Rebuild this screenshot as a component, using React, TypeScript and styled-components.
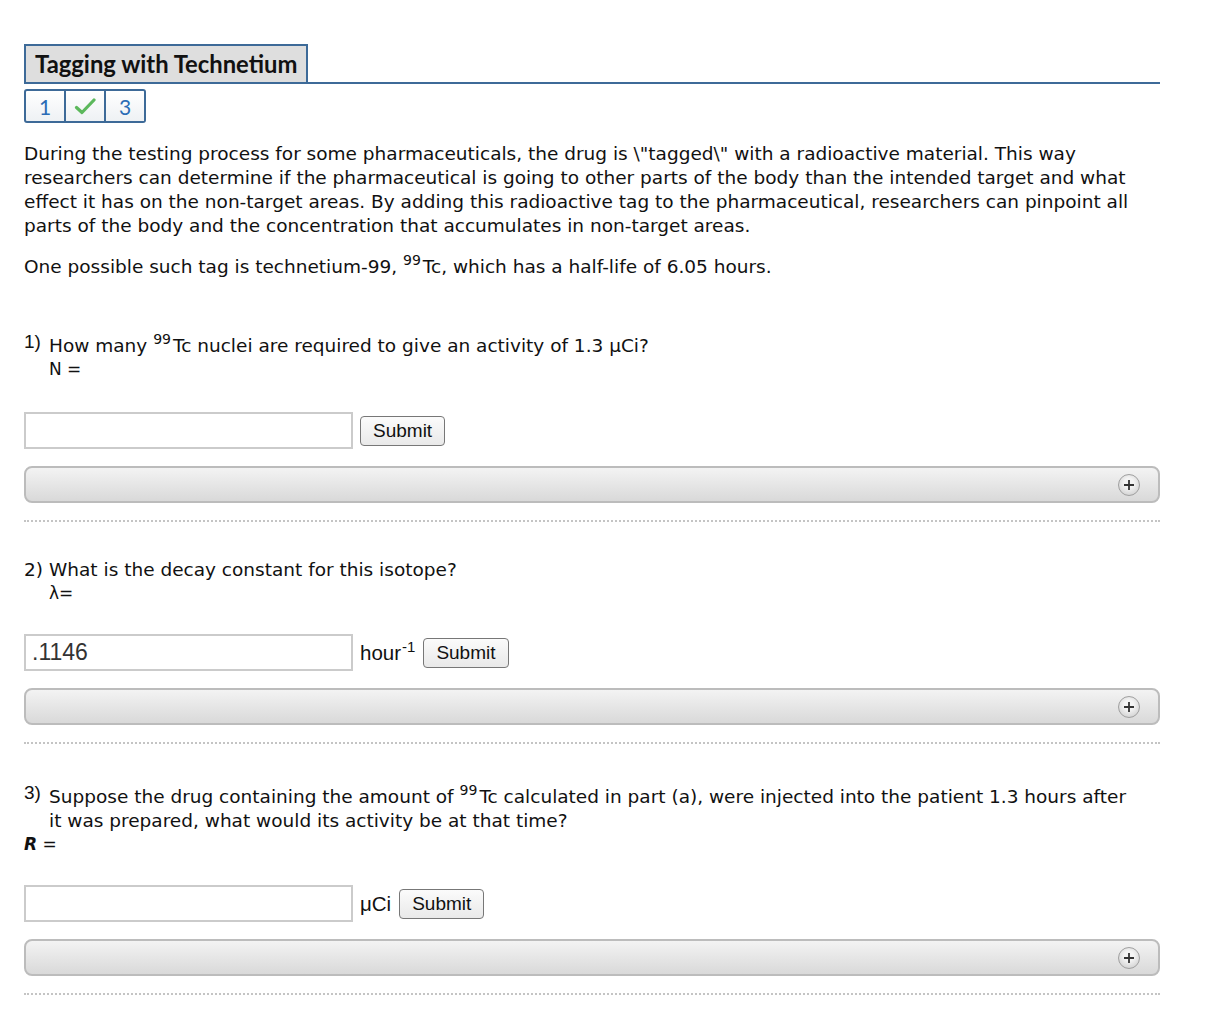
import React from "react"
import styled, { createGlobalStyle } from "styled-components"

const GlobalStyle = createGlobalStyle`
  body {
    margin: 0;
    background: #fff;
    color: #111;
    font-family: "DejaVu Sans", Verdana, sans-serif;
  }
`

const Page = styled.div`
  padding: 44px 58px 20px 24px;
`

const Header = styled.div`
  display: flex;
  border-bottom: 2px solid #3d6a98;
`

const Tab = styled.div`
  background: #dedede;
  border: 2px solid #3d6a98;
  border-bottom: none;
  padding: 0 9px 0 9px;
  height: 36px;
  display: flex;
  align-items: center;
  font-family: Lato, "Open Sans", sans-serif;
  font-weight: 700;
  font-size: 23.8px;
  color: #111;
`

const Pager = styled.div`
  display: flex;
  margin-top: 5px;
`

const PageBox = styled.div<{ $first?: boolean; $last?: boolean }>`
  width: 38px;
  height: 30px;
  border: 2px solid #3d6a98;
  border-left-width: ${(p) => (p.$first ? "2px" : "0")};
  border-radius: ${(p) => (p.$first ? "3px 0 0 3px" : p.$last ? "0 3px 3px 0" : "0")};
  background: linear-gradient(#ffffff, #eef1f4);
  display: flex;
  align-items: center;
  justify-content: center;
  font-family: Lato, "Open Sans", sans-serif;
  font-size: 21px;
  color: #2b6cb5;
`

const Para = styled.p<{ $gap?: number }>`
  margin: ${(p) => p.$gap ?? 0}px 0 0;
  font-size: 18.5px;
  line-height: 24px;
`

const Sup = styled.sup`
  font-size: 0.76em;
  line-height: 0;
  position: relative;
  top: -0.08em;
  margin-right: 2px;
`

const Question = styled.div<{ $gap: number }>`
  margin-top: ${(p) => p.$gap}px;
  display: flex;
  align-items: flex-start;
`

const Num = styled.span<{ $plain?: boolean }>`
  width: 25px;
  flex: none;
  font-family: ${(p) => (p.$plain ? `"DejaVu Sans", Verdana, sans-serif` : `"Liberation Sans", Arial, sans-serif`)};
  font-size: ${(p) => (p.$plain ? "18.5px" : "19px")};
  line-height: ${(p) => (p.$plain ? "24px" : "15px")};
`

const QText = styled.div`
  font-size: 18.5px;
  line-height: 24px;
  padding-right: 20px;
`

const Label = styled.div<{ $indent?: boolean }>`
  padding-left: ${(p) => (p.$indent ? "25px" : "0")};
  font-size: 17px;
  line-height: 22px;
`

const AnswerRow = styled.div<{ $gap: number }>`
  margin-top: ${(p) => p.$gap}px;
  display: flex;
  align-items: center;
  gap: 7px;
  font-family: "Liberation Sans", Arial, sans-serif;
`

const Input = styled.input`
  box-sizing: border-box;
  width: 329px;
  height: 37px;
  border: 2px solid #cbcbcb;
  padding: 2px 6px;
  font-family: "Liberation Sans", Arial, sans-serif;
  font-size: 23px;
  color: #333;
  outline: none;
`

const Unit = styled.span`
  font-size: 20.5px;
  color: #111;
  margin-right: 1px;
`

const UnitSup = styled.sup`
  font-size: 15px;
  line-height: 0;
  margin-left: 1px;
`

const SubmitButton = styled.button`
  height: 30px;
  padding: 0 12px;
  border: 1px solid #777;
  border-radius: 4px;
  background: linear-gradient(#fbfbfb, #e9e9e9);
  font-family: "Liberation Sans", Arial, sans-serif;
  font-size: 19px;
  color: #111;
`

const HintBar = styled.div`
  margin-top: 17px;
  box-sizing: border-box;
  height: 37px;
  border: 2px solid #bcbcbc;
  border-radius: 8px;
  background: linear-gradient(#f3f3f3, #d9d9d9);
  display: flex;
  align-items: center;
  justify-content: flex-end;
  padding-right: 18px;
`

const PlusCircle = styled.div`
  width: 22px;
  height: 22px;
  border-radius: 50%;
  background: radial-gradient(circle at 50% 40%, #f4f4f4 30%, #c6c6c6 100%);
  border: 1.5px solid #a0a0a0;
  box-sizing: border-box;
  display: flex;
  align-items: center;
  justify-content: center;
`

const Divider = styled.div`
  margin-top: 17px;
  border-top: 2px dotted #c4c4c4;
`

const Bold = styled.span`
  font-weight: 700;
  font-style: italic;
`

const Plus = () => (
  <PlusCircle>
    <svg width="12" height="12" viewBox="0 0 12 12">
      <path d="M6 1v10M1 6h10" stroke="#333" strokeWidth="1.8" />
    </svg>
  </PlusCircle>
)

const Check = () => (
  <svg width="22" height="18" viewBox="0 0 22 18">
    <path d="M2.5 10.5l5.5 5L20 3" fill="none" stroke="#5cb85c" strokeWidth="3.2" strokeLinecap="round" strokeLinejoin="round" />
  </svg>
)

const Hint = () => (
  <>
    <HintBar>
      <Plus />
    </HintBar>
    <Divider />
  </>
)

export default function App() {
  return (
    <Page>
      <GlobalStyle />
      <Header>
        <Tab>Tagging with Technetium</Tab>
      </Header>
      <Pager>
        <PageBox $first>1</PageBox>
        <PageBox>
          <Check />
        </PageBox>
        <PageBox $last>3</PageBox>
      </Pager>

      <Para $gap={19}>
        During the testing process for some pharmaceuticals, the drug is \"tagged\" with a radioactive material. This way
        researchers can determine if the pharmaceutical is going to other parts of the body than the intended target and
        what effect it has on the non-target areas. By adding this radioactive tag to the pharmaceutical, researchers can
        pinpoint all parts of the body and the concentration that accumulates in non-target areas.
      </Para>
      <Para $gap={17}>
        One possible such tag is technetium-99, <Sup>99</Sup>Tc, which has a half-life of 6.05 hours.
      </Para>

      <Question $gap={55}>
        <Num>1)</Num>
        <QText>
          How many <Sup>99</Sup>Tc nuclei are required to give an activity of 1.3 μCi?
        </QText>
      </Question>
      <Label $indent>N =</Label>
      <AnswerRow $gap={32}>
        <Input />
        <SubmitButton>Submit</SubmitButton>
      </AnswerRow>
      <Hint />

      <Question $gap={36}>
        <Num $plain>2)</Num>
        <QText>What is the decay constant for this isotope?</QText>
      </Question>
      <Label $indent>λ=</Label>
      <AnswerRow $gap={30}>
        <Input defaultValue=".1146" />
        <Unit>
          hour<UnitSup>-1</UnitSup>
        </Unit>
        <SubmitButton>Submit</SubmitButton>
      </AnswerRow>
      <Hint />

      <Question $gap={41}>
        <Num>3)</Num>
        <QText>
          Suppose the drug containing the amount of <Sup>99</Sup>Tc calculated in part (a), were injected into the
          patient 1.3 hours after it was prepared, what would its activity be at that time?
        </QText>
      </Question>
      <Label>
        <Bold>R</Bold> =
      </Label>
      <AnswerRow $gap={30}>
        <Input />
        <Unit>μCi</Unit>
        <SubmitButton>Submit</SubmitButton>
      </AnswerRow>
      <Hint />
    </Page>
  )
}
